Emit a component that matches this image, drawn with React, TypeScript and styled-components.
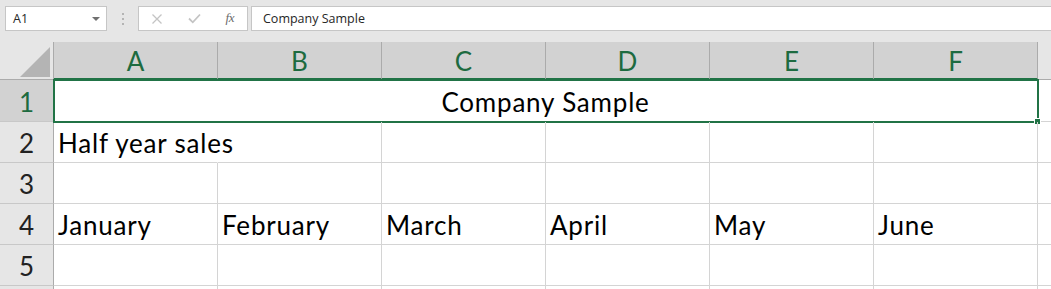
import React from "react";
import styled, { createGlobalStyle, css } from "styled-components";

const GREEN = "#217346";

const GlobalStyle = createGlobalStyle`
  html, body {
    margin: 0;
    padding: 0;
    background: #ffffff;
  }
  body {
    font-family: "Open Sans", "Noto Sans", sans-serif;
  }
`;

const Window = styled.div`
  width: 1051px;
  height: 289px;
  overflow: hidden;
  background: #e6e6e6;
`;

const FormulaBar = styled.div`
  height: 42px;
  display: flex;
  align-items: flex-start;
  padding: 6px 0 0 5px;
  box-sizing: border-box;
`;

const Box = styled.div`
  height: 25px;
  box-sizing: border-box;
  background: #ffffff;
  border: 1px solid #c6c6c6;
  display: flex;
  align-items: center;
  font-size: 12.5px;
  color: #262626;
`;

const NameBox = styled(Box)`
  width: 102px;
  padding: 0 6px 0 7px;
  justify-content: space-between;
`;

const Caret = styled.span`
  width: 0;
  height: 0;
  border-left: 4px solid transparent;
  border-right: 4px solid transparent;
  border-top: 4px solid #707070;
`;

const Grip = styled.div`
  width: 31px;
  height: 25px;
  display: flex;
  align-items: center;
  justify-content: center;
`;

const FxButtons = styled(Box)`
  width: 110px;
  padding: 0 13px 0 12px;
  justify-content: space-between;
`;

const FxLabel = styled.span`
  font-family: "Liberation Serif", serif;
  font-style: italic;
  font-size: 13px;
  color: #6b6b6b;
  letter-spacing: -0.5px;
  margin-top: -2px;
`;

const FormulaInput = styled(Box)`
  flex: 1;
  margin-left: 3px;
  border-right: none;
  padding-left: 11px;
`;

const Sheet = styled.div`
  display: grid;
  grid-template-columns: 54px repeat(6, 164px) 1fr;
  grid-template-rows: 38px 42px repeat(5, 41px);
  background: #ffffff;
  font-family: "Lato", "Open Sans", sans-serif;
`;

const Corner = styled.div`
  background: #e6e6e6;
  border-right: 1px solid #ababab;
  border-bottom: 1px solid #ababab;
  display: flex;
  align-items: flex-end;
  justify-content: flex-end;
  padding: 0 3px 2px 0;
`;

const Triangle = styled.div`
  width: 0;
  height: 0;
  border-left: 30px solid transparent;
  border-bottom: 30px solid #b4b4b4;
`;

const ColHeader = styled.div<{ $selected?: boolean }>`
  box-sizing: border-box;
  background: ${(p) => (p.$selected ? "#d2d2d2" : "#e6e6e6")};
  color: ${(p) => (p.$selected ? "#1d6b40" : "#262626")};
  border-right: 1px solid ${(p) => (p.$selected ? "#ababab" : "transparent")};
  border-bottom: ${(p) => (p.$selected ? `2px solid ${GREEN}` : "1px solid #ababab")};
  display: flex;
  align-items: flex-end;
  justify-content: center;
  font-size: 26px;
  line-height: 1;
  padding-bottom: 4px;
`;

const RowHeader = styled.div<{ $selected?: boolean }>`
  box-sizing: border-box;
  background: ${(p) => (p.$selected ? "#d2d2d2" : "#e6e6e6")};
  color: ${(p) => (p.$selected ? "#1d6b40" : "#222222")};
  border-right: 1px solid #ababab;
  border-bottom: 1px solid #c8c8c8;
  display: flex;
  align-items: flex-end;
  justify-content: center;
  font-size: 26px;
  line-height: 1;
  padding-bottom: 6px;
`;

const Cell = styled.div<{ $overflow?: boolean; $span?: number; $center?: boolean }>`
  box-sizing: border-box;
  position: relative;
  border-right: 1px solid ${(p) => (p.$overflow ? "transparent" : "#d4d4d4")};
  border-bottom: 1px solid #d4d4d4;
  display: flex;
  align-items: flex-end;
  justify-content: ${(p) => (p.$center ? "center" : "flex-start")};
  padding: 0 0 6px 4px;
  font-size: 26px;
  letter-spacing: 0.8px;
  line-height: 1;
  color: #000000;
  white-space: nowrap;
  ${(p) =>
    p.$span &&
    css`
      grid-column: span ${p.$span};
      padding-left: 0;
    `}
  ${(p) =>
    p.$overflow &&
    css`
      overflow: visible;
      z-index: 1;
    `}
`;

const RestCell = styled.div<{ $header?: boolean }>`
  background: ${(p) => (p.$header ? "#e6e6e6" : "#ffffff")};
  border-bottom: 1px solid ${(p) => (p.$header ? "#ababab" : "#d4d4d4")};
`;

const SelectionFrame = styled.div`
  position: absolute;
  top: -1px;
  left: -1px;
  right: -2px;
  bottom: -2px;
  border: 2px solid ${GREEN};
  pointer-events: none;
`;

const FillHandle = styled.div`
  position: absolute;
  right: -4px;
  bottom: -4px;
  width: 5px;
  height: 5px;
  background: ${GREEN};
  border: 1px solid #ffffff;
`;

const columns = ["A", "B", "C", "D", "E", "F"];

const rows: { n: number; label?: boolean; cells: string[] }[] = [
  { n: 2, label: true, cells: ["Half year sales", "", "", "", "", ""] },
  { n: 3, label: true, cells: ["", "", "", "", "", ""] },
  { n: 4, label: true, cells: ["January", "February", "March", "April", "May", "June"] },
  { n: 5, label: true, cells: ["", "", "", "", "", ""] },
  { n: 6, label: false, cells: ["", "", "", "", "", ""] },
];

const CancelIcon = () => (
  <svg width="12" height="12" viewBox="0 0 12 12">
    <path d="M1.5 1.5 L10.5 10.5 M10.5 1.5 L1.5 10.5" stroke="#c4c4c4" strokeWidth="1.3" fill="none" />
  </svg>
);

const CheckIcon = () => (
  <svg width="13" height="11" viewBox="0 0 13 11">
    <path d="M1 5.5 L4.8 9.3 L12 1.5" stroke="#c4c4c4" strokeWidth="1.8" fill="none" />
  </svg>
);

const GripDots = () => (
  <svg width="4" height="14" viewBox="0 0 4 14">
    <rect x="1" y="1" width="2" height="2" fill="#b4b4b4" />
    <rect x="1" y="6" width="2" height="2" fill="#b4b4b4" />
    <rect x="1" y="11" width="2" height="2" fill="#b4b4b4" />
  </svg>
);

export default function App() {
  return (
    <>
      <GlobalStyle />
      <Window>
        <FormulaBar>
          <NameBox>
            <span>A1</span>
            <Caret />
          </NameBox>
          <Grip>
            <GripDots />
          </Grip>
          <FxButtons>
            <CancelIcon />
            <CheckIcon />
            <FxLabel>fx</FxLabel>
          </FxButtons>
          <FormulaInput>Company Sample</FormulaInput>
        </FormulaBar>
        <Sheet>
          <Corner>
            <Triangle />
          </Corner>
          {columns.map((c) => (
            <ColHeader key={c} $selected>
              {c}
            </ColHeader>
          ))}
          <RestCell $header />

          <RowHeader $selected>1</RowHeader>
          <Cell $span={6} $center>
            Company Sample
            <SelectionFrame>
              <FillHandle />
            </SelectionFrame>
          </Cell>
          <RestCell />

          {rows.map((r) => (
            <React.Fragment key={r.n}>
              <RowHeader>{r.label ? r.n : null}</RowHeader>
              {r.cells.map((text, i) => (
                <Cell key={i} $overflow={i === 0 && r.n === 2}>
                  {text}
                </Cell>
              ))}
              <RestCell />
            </React.Fragment>
          ))}
        </Sheet>
      </Window>
    </>
  );
}
